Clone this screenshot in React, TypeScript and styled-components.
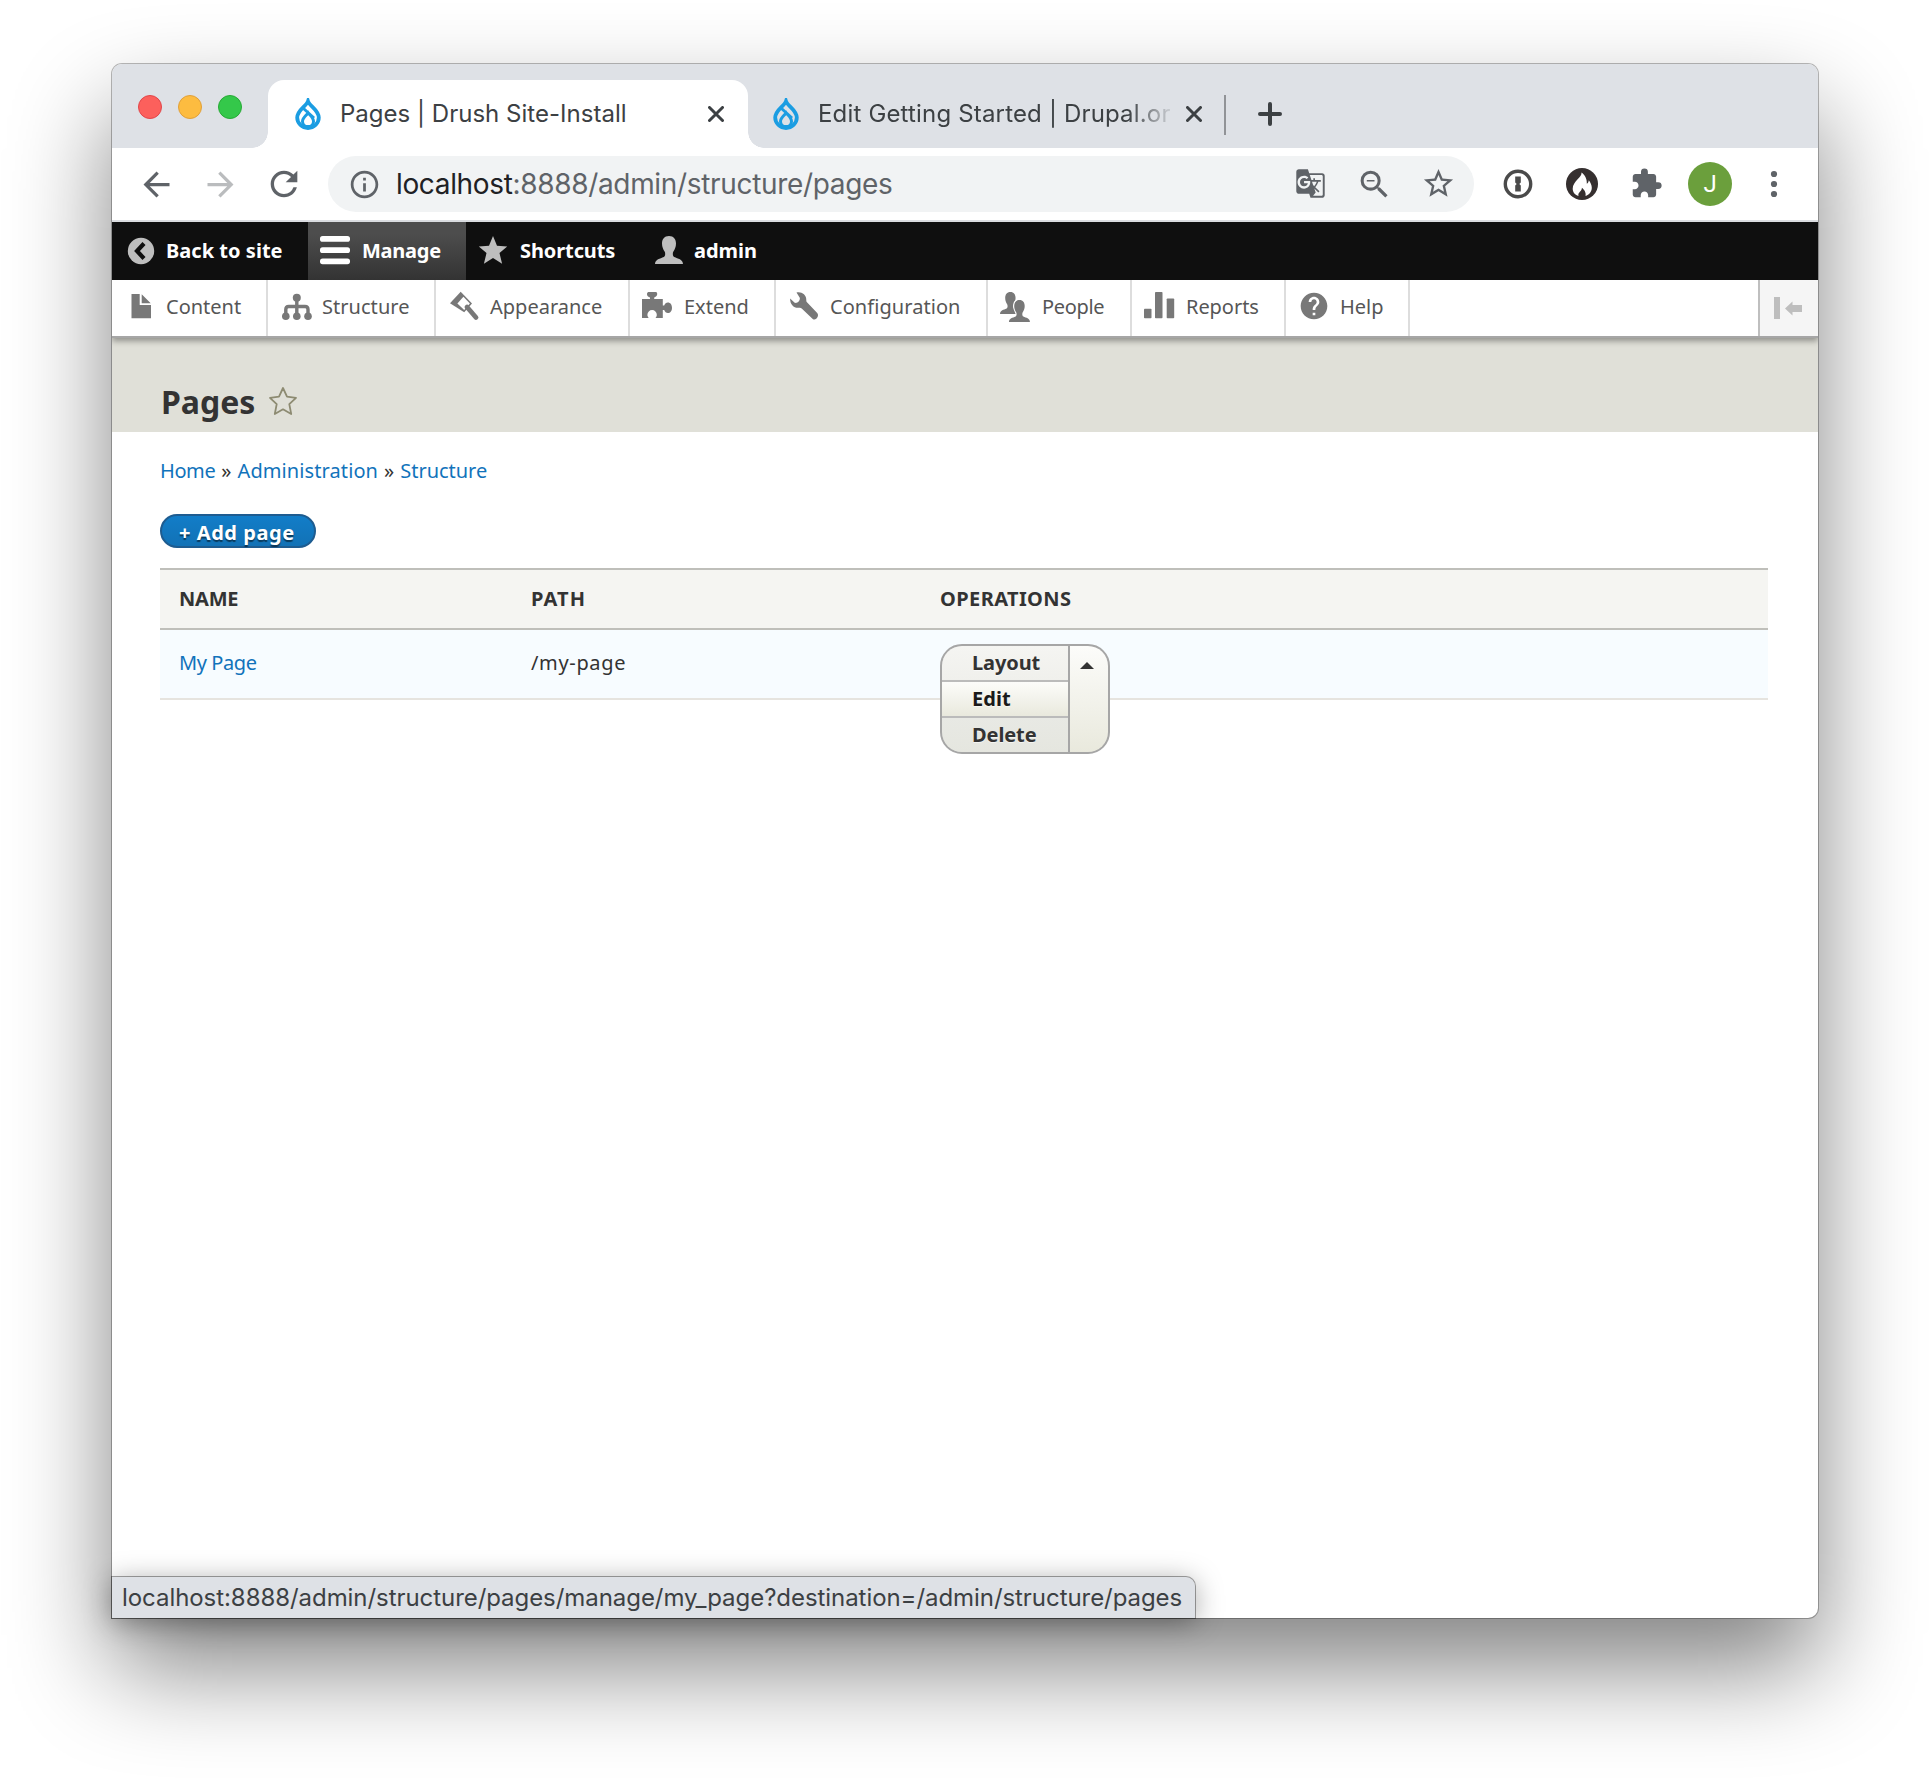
import React from 'react';
import styled, { createGlobalStyle, css } from 'styled-components';
import {
  MdArrowBack,
  MdArrowForward,
  MdRefresh,
  MdInfoOutline,
  MdGTranslate,
  MdZoomOut,
  MdStarBorder,
  MdExtension,
  MdHelp,
} from 'react-icons/md';

const chromeFont = "Inter, Roboto, 'Liberation Sans', sans-serif";
const adminFont = "'Noto Sans', 'Open Sans', 'DejaVu Sans', sans-serif";

const GlobalStyle = createGlobalStyle`
  * { box-sizing: border-box; }
  body { margin: 0; background: #fff; }
`;

const Desktop = styled.div`
  width: 1930px;
  height: 1778px;
  padding: 64px 112px 160px;
  overflow: hidden;
  background: #fff;
`;

const Window = styled.div`
  position: relative;
  display: flex;
  flex-direction: column;
  height: 1554px;
  border-radius: 10px 10px 10px 0;
  background: #fff;
  box-shadow: 0 0 0 1px rgba(0, 0, 0, 0.27), 0 50px 100px rgba(0, 0, 0, 0.49);
  font-family: ${chromeFont};
`;

const Label = styled.span<{ $ls?: number }>`
  letter-spacing: ${(p) => p.$ls ?? 0}px;
  white-space: nowrap;
`;

/* ---------- browser chrome ---------- */

const TabStrip = styled.div`
  display: flex;
  height: 84px;
  padding: 16px 0 0 26px;
  border-radius: 10px 10px 0 0;
  background: #dee1e6;
`;

const Lights = styled.div`
  display: flex;
  gap: 16px;
  width: 130px;
  padding-top: 15px;
`;

const Light = styled.span<{ $fill: string; $ring: string }>`
  width: 24px;
  height: 24px;
  border: 1px solid ${(p) => p.$ring};
  border-radius: 50%;
  background: ${(p) => p.$fill};
`;

const flare = css`
  content: '';
  position: absolute;
  bottom: 0;
  width: 16px;
  height: 16px;
`;

const Tab = styled.div<{ $active?: boolean; $width: number; $lead: number }>`
  position: relative;
  display: flex;
  align-items: center;
  width: ${(p) => p.$width}px;
  height: 68px;
  padding-left: ${(p) => p.$lead}px;
  border-radius: 16px 16px 0 0;
  color: #3c4043;
  font-size: 24px;
  ${(p) =>
    p.$active &&
    css`
      background: #fff;
      &::before {
        ${flare}
        left: -16px;
        background: radial-gradient(circle at 0 0, transparent 15.5px, #fff 16px);
      }
      &::after {
        ${flare}
        right: -16px;
        background: radial-gradient(circle at 100% 0, transparent 15.5px, #fff 16px);
      }
    `}
`;

const TabTitle = styled.span<{ $fade?: boolean }>`
  width: 353px;
  margin-left: 19px;
  padding-bottom: 2px;
  white-space: nowrap;
  ${(p) =>
    p.$fade &&
    css`
      -webkit-mask-image: linear-gradient(90deg, #000 310px, transparent 358px);
      mask-image: linear-gradient(90deg, #000 310px, transparent 358px);
    `}
`;

const CloseSlot = styled.span`
  display: flex;
  margin-left: 15px;
`;

const Divider = styled.span`
  width: 2px;
  height: 40px;
  margin-top: 15px;
  background: #919397;
`;

const NewTab = styled.span`
  display: flex;
  align-items: center;
  height: 68px;
  margin-left: 32px;
`;

const Toolbar = styled.div`
  display: flex;
  align-items: center;
  height: 74px;
  border-bottom: 2px solid #dadce0;
  color: #5f6368;
`;

const NavButton = styled.span<{ $muted?: boolean }>`
  display: flex;
  align-items: center;
  justify-content: center;
  width: 64px;
  color: ${(p) => (p.$muted ? '#babcbe' : '#5f6368')};
`;

const NavGroup = styled.div`
  display: flex;
  width: 216px;
  padding-left: 12px;
`;

const Omnibox = styled.div`
  display: flex;
  align-items: center;
  width: 1146px;
  height: 56px;
  padding-left: 20px;
  border-radius: 28px;
  background: #f1f3f4;
`;

const Url = styled.span`
  flex: 1;
  margin-left: 15px;
  color: #5f6368;
  font-size: 28px;
  line-height: 56px;
  white-space: nowrap;
`;

const Host = styled.span`
  color: #202124;
`;

const OmniIcon = styled.span<{ $lift?: number }>`
  display: flex;
  align-items: center;
  justify-content: center;
  width: 64px;
  padding-bottom: ${(p) => p.$lift ?? 0}px;
`;

const OmniActions = styled.div`
  display: flex;
  padding-right: 4px;
`;

const Extensions = styled.div`
  display: flex;
  align-items: center;
  padding-left: 12px;
`;

const Avatar = styled.span`
  display: flex;
  align-items: center;
  justify-content: center;
  width: 44px;
  height: 44px;
  border-radius: 50%;
  background: #6b9f3c;
  color: #fff;
  font-family: Roboto, sans-serif;
  font-size: 24px;
`;

/* ---------- admin toolbar ---------- */

const AdminBar = styled.div`
  display: flex;
  height: 58px;
  background: #0f0f0f;
  color: #fff;
  font: 700 20px/58px ${adminFont};
`;

const IconSlot = styled.span`
  display: flex;
  flex: none;
  width: 42px;
  svg {
    flex: none;
    overflow: visible;
  }
`;

const BarItem = styled.div<{ $width: number; $active?: boolean }>`
  display: flex;
  align-items: center;
  width: ${(p) => p.$width}px;
  height: 58px;
  padding-left: 12px;
  background: ${(p) => (p.$active ? 'linear-gradient(#4d4d4d 20%, #333)' : 'none')};
  color: #fff;
  svg {
    color: ${(p) => (p.$active ? '#fff' : '#bebebe')};
  }
`;

const Tray = styled.div`
  position: relative;
  z-index: 1;
  display: flex;
  height: 58px;
  border-bottom: 2px solid #a6a6a6;
  background: #fff;
  box-shadow: 0 3px 6px rgba(0, 0, 0, 0.36);
  clip-path: inset(0 0 -20px 0);
  color: #565656;
  font: 400 20px/54px ${adminFont};
`;

const TrayItem = styled.div<{ $width: number }>`
  display: flex;
  align-items: flex-start;
  width: ${(p) => p.$width}px;
  height: 56px;
  padding-left: 12px;
  border-right: 2px solid #ddd;
  svg {
    color: #787878;
  }
  ${IconSlot} {
    margin-top: 10px;
  }
`;

const TrayToggle = styled.div`
  display: flex;
  align-items: center;
  justify-content: center;
  width: 60px;
  height: 56px;
  margin-left: auto;
  padding: 0 2px 0 0;
  border-left: 2px solid #bfbfbf;
  background: #f5f5f5;
`;

/* ---------- page ---------- */

const PageHeader = styled.header`
  display: flex;
  height: 94px;
  padding: 42px 0 0 49px;
  background: #e0e0d8;
`;

const Title = styled.h1`
  margin: 0;
  color: #333;
  font: 700 32px/43px ${adminFont};
`;

const StarSlot = styled.span`
  margin: 6px 0 0 13px;
`;

const Content = styled.main`
  display: flex;
  flex-direction: column;
  align-items: flex-start;
  padding: 25px 50px 0 48px;
  color: #333;
  font: 400 20px/28px ${adminFont};
`;

const Crumbs = styled.nav`
  display: flex;
  gap: 6px;
  height: 28px;
`;

const Link = styled.a`
  color: #1173bb;
  text-decoration: none;
`;

const AddButton = styled.button`
  width: 156px;
  height: 34px;
  margin: 29px 0 20px;
  padding: 3px 0 0 17px;
  border: 2px solid #1e5c90;
  border-radius: 17px;
  background: linear-gradient(#127dc8, #1272b6);
  color: #fff;
  font: 700 20px/27px ${adminFont};
  text-align: left;
  text-shadow: 0 2px 1px rgba(0, 0, 0, 0.5);
  white-space: nowrap;
`;

const Table = styled.div`
  align-self: stretch;
`;

const TableHead = styled.div`
  display: grid;
  grid-template-columns: 352px 409px 1fr;
  height: 62px;
  border: solid #bfbfba;
  border-width: 2px 0;
  background: #f5f5f2;
  font-weight: 700;
  line-height: 58px;
`;

const TableRow = styled.div`
  display: grid;
  grid-template-columns: 352px 409px 1fr;
  height: 70px;
  border-bottom: 2px solid #e6e4df;
  background: #f7fcff;
  line-height: 36px;
`;

const HeadCell = styled.div`
  padding-left: 19px;
`;

const Cell = styled.div`
  position: relative;
  padding: 15px 0 0 19px;
`;

const DropButton = styled.div`
  position: absolute;
  top: 14px;
  left: 19px;
  display: flex;
  width: 170px;
  height: 110px;
  border: 2px solid #a6a6a6;
  border-radius: 22px;
  overflow: hidden;
  background: #a6a6a6;
`;

const Actions = styled.div`
  display: flex;
  flex-direction: column;
  gap: 2px;
  width: 126px;
  background: #bbb;
`;

const Action = styled.div<{ $bg: string; $hover?: boolean }>`
  height: 34px;
  padding-left: 30px;
  background: ${(p) => p.$bg};
  color: ${(p) => (p.$hover ? '#1a1a1a' : '#333')};
  font-weight: 700;
  line-height: 34px;
  text-shadow: 0 1px rgba(255, 255, 255, 0.6);
`;

const Toggle = styled.div`
  flex: 1;
  margin-left: 2px;
  padding: 16px 0 0 10px;
  background: linear-gradient(#fcfcfa, #e9e9dd);
  line-height: 0;
`;

const StatusBubble = styled.div`
  position: absolute;
  bottom: 0;
  left: 0;
  width: 1083px;
  height: 41px;
  padding-left: 10px;
  border-radius: 0 9px 0 0;
  background: #dee1e6;
  box-shadow: 0 0 0 1px rgba(0, 0, 0, 0.35), 0 4px 28px rgba(0, 0, 0, 0.36);
  color: #3c4043;
  font-size: 24px;
  line-height: 41px;
`;

/* ---------- icons ---------- */

const DropLogo = () => (
  <svg width="26" height="32" viewBox="0 0 26 32" fill="none" stroke="#1b9de2">
    <path d="M13 3.2C11.5 8 2.2 12 2.2 19.6a10.8 10.4 0 0 0 21.6 0C23.8 12 14.5 8 13 3.2z" strokeWidth="3.8" />
    <path d="M8.5 10.5l10.500 9.500M13.200 14.800c-2 2.800-5.700 5.200-5.700 8.600a5.500 5.200 0 0 0 11 0c0-3.400-3.300-5.800-5.300-8.600z" strokeWidth="3" />
  </svg>
);

const Cross = () => (
  <svg width="16" height="16" viewBox="0 0 16 16" stroke="#3c4043" strokeWidth="3" strokeLinecap="round">
    <path d="M1.500 1.500l13 13M14.500 1.500l-13 13" />
  </svg>
);

const Plus = () => (
  <svg width="24" height="24" viewBox="0 0 24 24" stroke="#3c4043" strokeWidth="4" strokeLinecap="round">
    <path d="M12 2v20M2 12h20" />
  </svg>
);

const OnePassword = () => (
  <svg width="30" height="30" viewBox="0 0 30 30">
    <circle cx="15" cy="15" r="12.700" fill="#fff" stroke="#4a4a4a" strokeWidth="3.400" />
    <path d="M12.200 7.500h5.600v6l-1.500 1.500 1.500 1.500v6h-5.600v-6l1.500-1.500-1.500-1.500z" fill="#4a4a4a" />
  </svg>
);

const Flame = () => (
  <svg width="32" height="32" viewBox="0 0 32 32">
    <circle cx="16" cy="16" r="16" fill="#352f2f" />
    <path
      d="M15.500 4.500c.8 4.500-8.800 9-8.800 16.200 0 3.800 2.600 6.300 5.800 7.300-1-3.800 3.600-4.600 3.400-8.200 2.400 2 4.400 4.800 3.600 8.200 3.600-1.200 6.300-4.200 6.300-8.200 0-2.600-1.200-5.400-3-7.600-.3 1.700-.9 2.800-2 3.600.4-4.400-1.600-8.600-5.300-11.300z"
      fill="#fff"
    />
  </svg>
);

const Dots = () => (
  <svg width="8" height="28" viewBox="0 0 8 28" fill="#5f6368">
    <circle cx="4" cy="4" r="3.100" />
    <circle cx="4" cy="14" r="3.100" />
    <circle cx="4" cy="24" r="3.100" />
  </svg>
);

const Glyph = ({ children }: { children: React.ReactNode }) => (
  <svg width="32" height="32" viewBox="0 0 32 32" fill="currentColor">
    {children}
  </svg>
);

const BackIcon = () => (
  <Glyph>
    <circle cx="17" cy="16" r="13.200" />
    <path d="M20 8.500L13 16l7 7.500" fill="none" stroke="#0f0f0f" strokeWidth="4.200" />
  </Glyph>
);

const MenuIcon = () => (
  <Glyph>
    <rect y="1" width="30" height="5.800" rx="2.600" />
    <rect y="12.200" width="30" height="5.800" rx="2.600" />
    <rect y="23.400" width="30" height="5.800" rx="2.600" />
  </Glyph>
);

const StarIcon = () => (
  <Glyph>
    <path d="M15 1l4 9.700 10.200.7-7.700 6.700 2.600 10.600L15 22.900l-9.100 5.800 2.600-10.600L.8 11.400 11 10.700z" />
  </Glyph>
);

const userPath =
  'M17 1c4.700 0 7 3.300 7 7.600 0 3.400-1.300 6-2.600 8-.9 1.500-.9 4.400.8 5.300 3.600 1.700 8.800 2.200 8.800 7.100H3c0-4.900 5.200-5.400 8.800-7.100 1.700-.9 1.700-3.800.8-5.300-1.300-2-2.600-4.600-2.600-8C10 4.300 12.300 1 17 1z';

const UserIcon = () => (
  <Glyph>
    <path d={userPath} />
  </Glyph>
);

const ContentIcon = () => (
  <Glyph>
    <path d="M7.500 4h8.200v11H27v13.300H7.500zM17.700 4.200l9 9h-9z" />
  </Glyph>
);

const StructureIcon = () => (
  <Glyph>
    <circle cx="16.800" cy="7.700" r="4" />
    <circle cx="5.800" cy="26.300" r="3.800" />
    <circle cx="16.800" cy="26.300" r="3.800" />
    <circle cx="28" cy="26.300" r="3.800" />
    <path d="M16.800 8v18M5.800 26v-6.500q0-3 3-3H25q3 0 3 3V26" fill="none" stroke="currentColor" strokeWidth="3.400" />
  </Glyph>
);

const AppearanceIcon = () => (
  <Glyph>
    <path d="M12.700 1.800L24 13.600l-7.800 8.600L2 13.200z" />
    <path d="M9.400 13.600l6-6.800 6.500 6.800-5.700 6.400z" fill="#fff" />
    <path d="M19 17l9 10.500" stroke="currentColor" strokeWidth="4.800" strokeLinecap="round" />
  </Glyph>
);

const ExtendIcon = () => (
  <Glyph>
    <path d="M0 9h8V7.500C5.500 6.800 5 5.500 5 4c0-1.500 1-2 2-2h6.500c1 0 1.700.6 1.700 2 0 1.500-.8 2.800-3 3.500V9h8.600v6.500h1.400c.7-2 2-3 3.600-3 2.600 0 4.200 2.200 4.200 5.300s-1.600 5.300-4.200 5.300c-1.600 0-2.900-1-3.600-3h-1.400V28H13.500c.8-1 1.300-2 1.300-3.300a4.700 4.700 0 0 0-9.400 0C5.400 26 6 27 6.700 28H0z" />
  </Glyph>
);

const WrenchIcon = () => (
  <Glyph>
    <path d="M8.500 2.400c4.600-1.200 10 1.800 9.800 7.600-.1 1.200.2 1.800.9 2.500l10 10.600c2.400 2.600-.9 7.800-4.200 6.100L13.700 18.500c-.8-.8-1.500-.8-2.600-.7C6 18.400 2 14.700 2.100 8.500l4.600 4.300c2.800.6 5.300-1.500 5.200-4.700z" />
  </Glyph>
);

const PeopleIcon = () => (
  <Glyph>
    <path d={userPath} transform="translate(-2.200 1.200) scale(.74 .79)" />
    <path d={userPath} transform="translate(6.700 9.200) scale(.75 .79)" stroke="#fff" strokeWidth="3" paintOrder="stroke" />
  </Glyph>
);

const ReportsIcon = () => (
  <Glyph>
    <rect x="0" y="18.700" width="7.500" height="9.500" rx=".8" />
    <rect x="11" y="2" width="7.500" height="26.200" rx=".8" />
    <rect x="22.700" y="8.400" width="7.500" height="19.800" rx=".8" />
  </Glyph>
);

const CollapseIcon = () => (
  <svg width="30" height="24" viewBox="0 0 30 24" fill="#bebebe">
    <path d="M1 1h6v22H1zM12 12.500l7.500-7V9H29v7h-9.500v3.500z" />
  </svg>
);

const FavouriteStar = () => (
  <svg width="30" height="30" viewBox="0 0 30 30" fill="none" stroke="#8d8b72" strokeWidth="1.800" strokeLinejoin="round">
    <path d="M15 2l4 8.700 9 1.100-6.700 6.300 1.900 9.900L15 23.300 6.800 28l1.900-9.900L2 11.800l9-1.100z" />
  </svg>
);

const barItems = [
  { label: 'Back to site', width: 196, icon: <BackIcon />, ls: 0.03 },
  { label: 'Manage', width: 158, icon: <MenuIcon />, ls: -0.25, active: true },
  { label: 'Shortcuts', width: 174, icon: <StarIcon />, ls: -0.1 },
  { label: 'admin', width: 150, icon: <UserIcon />, ls: 0 },
];

const trayItems = [
  { label: 'Content', width: 156, icon: <ContentIcon />, ls: 0 },
  { label: 'Structure', width: 168, icon: <StructureIcon />, ls: 0.04 },
  { label: 'Appearance', width: 194, icon: <AppearanceIcon />, ls: 0 },
  { label: 'Extend', width: 146, icon: <ExtendIcon />, ls: 0 },
  { label: 'Configuration', width: 212, icon: <WrenchIcon />, ls: 0.06 },
  { label: 'People', width: 144, icon: <PeopleIcon />, ls: -0.35 },
  { label: 'Reports', width: 154, icon: <ReportsIcon />, ls: -0.05 },
  { label: 'Help', width: 124, icon: <MdHelp size={32} />, ls: -0.02 },
];

export default function App() {
  return (
    <>
      <GlobalStyle />
      <Desktop>
        <Window>
          <TabStrip>
            <Lights>
              <Light $fill="#fc605c" $ring="#e1464a" />
              <Light $fill="#fdbc40" $ring="#e0a03a" />
              <Light $fill="#34c84a" $ring="#27aa36" />
            </Lights>
            <Tab $active $width={480} $lead={27}>
              <DropLogo />
              <TabTitle>
                <Label $ls={0.02}>Pages | Drush Site-Install</Label>
              </TabTitle>
              <CloseSlot>
                <Cross />
              </CloseSlot>
            </Tab>
            <Tab $width={476} $lead={25}>
              <DropLogo />
              <TabTitle $fade>
                <Label $ls={0.17}>Edit Getting Started | Drupal.or</Label>
              </TabTitle>
              <CloseSlot>
                <Cross />
              </CloseSlot>
            </Tab>
            <Divider />
            <NewTab>
              <Plus />
            </NewTab>
          </TabStrip>
          <Toolbar>
            <NavGroup>
              <NavButton>
                <MdArrowBack size={39} />
              </NavButton>
              <NavButton $muted>
                <MdArrowForward size={39} />
              </NavButton>
              <NavButton>
                <MdRefresh size={40} />
              </NavButton>
            </NavGroup>
            <Omnibox>
              <MdInfoOutline size={33} />
              <Url>
                <Host>
                  <Label $ls={-0.35}>localhost</Label>
                </Host>
                <Label $ls={-0.33}>:8888/admin/structure/pages</Label>
              </Url>
              <OmniActions>
                <OmniIcon $lift={2}>
                  <MdGTranslate size={31} />
                </OmniIcon>
                <OmniIcon>
                  <MdZoomOut size={37} />
                </OmniIcon>
                <OmniIcon $lift={1}>
                  <MdStarBorder size={35} />
                </OmniIcon>
              </OmniActions>
            </Omnibox>
            <Extensions>
              <OmniIcon>
                <OnePassword />
              </OmniIcon>
              <OmniIcon>
                <Flame />
              </OmniIcon>
              <OmniIcon $lift={2}>
                <MdExtension size={33} />
              </OmniIcon>
              <OmniIcon>
                <Avatar>J</Avatar>
              </OmniIcon>
              <OmniIcon>
                <Dots />
              </OmniIcon>
            </Extensions>
          </Toolbar>
          <AdminBar>
            {barItems.map((item) => (
              <BarItem key={item.label} $width={item.width} $active={item.active}>
                <IconSlot>{item.icon}</IconSlot>
                <Label $ls={item.ls}>{item.label}</Label>
              </BarItem>
            ))}
          </AdminBar>
          <Tray>
            {trayItems.map((item) => (
              <TrayItem key={item.label} $width={item.width}>
                <IconSlot>{item.icon}</IconSlot>
                <Label $ls={item.ls}>{item.label}</Label>
              </TrayItem>
            ))}
            <TrayToggle>
              <CollapseIcon />
            </TrayToggle>
          </Tray>
          <PageHeader>
            <Title>
              <Label>Pages</Label>
            </Title>
            <StarSlot>
              <FavouriteStar />
            </StarSlot>
          </PageHeader>
          <Content>
            <Crumbs>
              <Link>
                <Label $ls={-0.4}>Home</Label>
              </Link>
              <Label>»</Label>
              <Link>
                <Label $ls={0.1}>Administration</Label>
              </Link>
              <Label>»</Label>
              <Link>
                <Label $ls={-0.03}>Structure</Label>
              </Link>
            </Crumbs>
            <AddButton>
              <Label $ls={0.55}>+ Add page</Label>
            </AddButton>
            <Table>
              <TableHead>
                <HeadCell>
                  <Label $ls={-0.2}>NAME</Label>
                </HeadCell>
                <HeadCell>
                  <Label $ls={1.1}>PATH</Label>
                </HeadCell>
                <HeadCell>
                  <Label $ls={0.4}>OPERATIONS</Label>
                </HeadCell>
              </TableHead>
              <TableRow>
                <Cell>
                  <Link>
                    <Label $ls={-0.4}>My Page</Label>
                  </Link>
                </Cell>
                <Cell>
                  <Label $ls={0.65}>/my-page</Label>
                </Cell>
                <Cell>
                  <DropButton>
                    <Actions>
                      <Action $bg="linear-gradient(#f5f5f2, #f0f0ec)">
                        <Label $ls={-0.1}>Layout</Label>
                      </Action>
                      <Action $bg="linear-gradient(#fcfcfa, #e9e9dd)" $hover>
                        <Label $ls={0.1}>Edit</Label>
                      </Action>
                      <Action $bg="linear-gradient(#e8e9e4, #e5e6df)">
                        <Label $ls={-0.1}>Delete</Label>
                      </Action>
                    </Actions>
                    <Toggle>
                      <svg width="14" height="7" viewBox="0 0 14 7">
                        <path d="M0 7l7-7 7 7z" fill="#333" />
                      </svg>
                    </Toggle>
                  </DropButton>
                </Cell>
              </TableRow>
            </Table>
          </Content>
          <StatusBubble>
            <Label $ls={-0.06}>
              localhost:8888/admin/structure/pages/manage/my_page?destination=/admin/structure/pages
            </Label>
          </StatusBubble>
        </Window>
      </Desktop>
    </>
  );
}
